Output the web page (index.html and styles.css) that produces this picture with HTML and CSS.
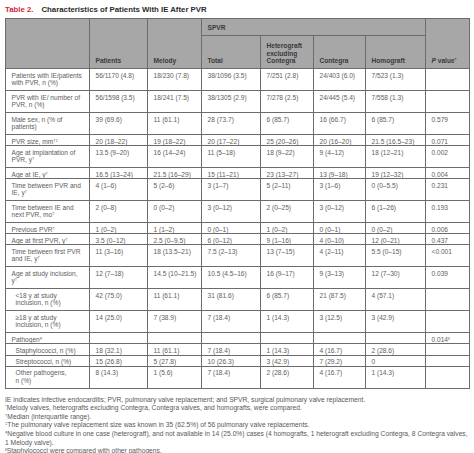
FILE: index.html
```html
<!DOCTYPE html>
<html>
<head>
<meta charset="utf-8">
<link rel="stylesheet" href="styles.css">
</head>
<body>
<div class="page">
  <div class="title"><span class="tnum">Table 2.</span><span class="ttext">Characteristics of Patients With IE After PVR</span></div>
  <table class="tbl">
    <colgroup>
      <col class="c1"><col class="c2"><col class="c3"><col class="c4"><col class="c5"><col class="c6"><col class="c7"><col class="c8">
    </colgroup>
    <thead>
      <tr class="h1">
        <th rowspan="2"></th>
        <th rowspan="2">Patients</th>
        <th rowspan="2">Melody</th>
        <th colspan="4" class="spvr">SPVR</th>
        <th rowspan="2"><i>P</i> value<sup>*</sup></th>
      </tr>
      <tr class="h2">
        <th>Total</th>
        <th>Heterograft<br>excluding<br>Contegra</th>
        <th>Contegra</th>
        <th>Homograft</th>
      </tr>
    </thead>
    <tbody>
      <tr class="d"><td>Patients with IE/patients<br>with PVR, n (%)</td><td>56/1170 (4.8)</td><td>18/230 (7.8)</td><td>38/1096 (3.5)</td><td>7/251 (2.8)</td><td>24/403 (6.0)</td><td>7/523 (1.3)</td><td></td></tr>
      <tr class="d"><td>PVR with IE/ number of<br>PVR, n (%)</td><td>56/1598 (3.5)</td><td>18/241 (7.5)</td><td>38/1305 (2.9)</td><td>7/278 (2.5)</td><td>24/445 (5.4)</td><td>7/558 (1.3)</td><td></td></tr>
      <tr class="d"><td>Male sex, n (% of<br>patients)</td><td>39 (69.6)</td><td>11 (61.1)</td><td>28 (73.7)</td><td>6 (85.7)</td><td>16 (66.7)</td><td>6 (85.7)</td><td>0.579</td></tr>
      <tr class="s"><td>PVR size, mm<sup>†‡</sup></td><td>20 (18–22)</td><td>19 (18–22)</td><td>20 (17–22)</td><td>25 (20–26)</td><td>20 (16–20)</td><td>21.5 (16.5–23)</td><td>0.071</td></tr>
      <tr class="d"><td>Age at implantation of<br>PVR, y<sup>†</sup></td><td>13.5 (9–20)</td><td>16 (14–24)</td><td>11 (5–18)</td><td>18 (9–22)</td><td>9 (4–12)</td><td>18 (12–21)</td><td>0.002</td></tr>
      <tr class="s"><td>Age at IE, y<sup>†</sup></td><td>16.5 (13–24)</td><td>21.5 (16–29)</td><td>15 (11–21)</td><td>23 (13–27)</td><td>13 (9–18)</td><td>19 (12–32)</td><td>0.004</td></tr>
      <tr class="d"><td>Time between PVR and<br>IE, y<sup>†</sup></td><td>4 (1–6)</td><td>5 (2–6)</td><td>3 (1–7)</td><td>5 (2–11)</td><td>3 (1–6)</td><td>0 (0–5.5)</td><td>0.231</td></tr>
      <tr class="d"><td>Time between IE and<br>next PVR, mo<sup>†</sup></td><td>2 (0–8)</td><td>0 (0–2)</td><td>3 (0–12)</td><td>2 (0–25)</td><td>3 (0–12)</td><td>6 (1–26)</td><td>0.193</td></tr>
      <tr class="s"><td>Previous PVR<sup>†</sup></td><td>1 (0–2)</td><td>1 (1–2)</td><td>0 (0–1)</td><td>1 (0–2)</td><td>0 (0–1)</td><td>0 (0–2)</td><td>0.006</td></tr>
      <tr class="s"><td>Age at first PVR, y<sup>†</sup></td><td>3.5 (0–12)</td><td>2.5 (0–9.5)</td><td>6 (0–12)</td><td>9 (1–16)</td><td>4 (0–10)</td><td>12 (0–21)</td><td>0.437</td></tr>
      <tr class="d"><td>Time between first PVR<br>and IE, y<sup>†</sup></td><td>11 (3–16)</td><td>18 (13.5–21)</td><td>7.5 (2–13)</td><td>13 (7–15)</td><td>4 (2–11)</td><td>5.5 (0–15)</td><td>&lt;0.001</td></tr>
      <tr class="d"><td>Age at study inclusion,<br>y<sup>†</sup></td><td>12 (7–18)</td><td>14.5 (10–21.5)</td><td>10.5 (4.5–16)</td><td>16 (9–17)</td><td>9 (3–13)</td><td>12 (7–30)</td><td>0.039</td></tr>
      <tr class="d"><td class="ind">&lt;18 y at study<br>inclusion, n (%)</td><td>42 (75.0)</td><td>11 (61.1)</td><td>31 (81.6)</td><td>6 (85.7)</td><td>21 (87.5)</td><td>4 (57.1)</td><td></td></tr>
      <tr class="d"><td class="ind">≥18 y at study<br>inclusion, n (%)</td><td>14 (25.0)</td><td>7 (38.9)</td><td>7 (18.4)</td><td>1 (14.3)</td><td>3 (12.5)</td><td>3 (42.9)</td><td></td></tr>
      <tr class="s"><td>Pathogen<sup>§</sup></td><td></td><td></td><td></td><td></td><td></td><td></td><td>0.014<sup>‖</sup></td></tr>
      <tr class="s"><td class="ind">Staphylococci, n (%)</td><td>18 (32.1)</td><td>11 (61.1)</td><td>7 (18.4)</td><td>1 (14.3)</td><td>4 (16.7)</td><td>2 (28.6)</td><td></td></tr>
      <tr class="s"><td class="ind">Streptococci, n (%)</td><td>15 (26.8)</td><td>5 (27.8)</td><td>10 (26.3)</td><td>3 (42.9)</td><td>7 (29.2)</td><td>0</td><td></td></tr>
      <tr class="d"><td class="ind">Other pathogens,<br>n (%)</td><td>8 (14.3)</td><td>1 (5.6)</td><td>7 (18.4)</td><td>2 (28.6)</td><td>4 (16.7)</td><td>1 (14.3)</td><td></td></tr>
    </tbody>
  </table>
  <div class="notes">
    <p>IE indicates infective endocarditis; PVR, pulmonary valve replacement; and SPVR, surgical pulmonary valve replacement.</p>
    <p><sup>*</sup>Melody valves, heterografts excluding Contegra, Contegra valves, and homografts, were compared.</p>
    <p><sup>†</sup>Median (interquartile range).</p>
    <p><sup>‡</sup>The pulmonary valve replacement size was known in 35 (62.5%) of 56 pulmonary valve replacements.</p>
    <p><sup>§</sup>Negative blood culture in one case (heterograft), and not available in 14 (25.0%) cases (4 homografts, 1 heterograft excluding Contegra, 8 Contegra valves,</p>
    <p>1 Melody valve).</p>
    <p><sup>‖</sup>Staphylococci were compared with other pathogens.</p>
  </div>
</div>
</body>
</html>
```

FILE: styles.css
```css
html, body {
  margin: 0;
  padding: 0;
  background: #ffffff;
}

body {
  font-family: "Liberation Sans", Arial, Helvetica, sans-serif;
  color: #5e5e5e;
  font-size: 6.6px;
}

.page {
  padding: 0 0 0 5px;
}

.title {
  height: 18px;
  line-height: 20px;
  font-size: 7.8px;
  font-weight: bold;
  white-space: nowrap;
}

.tnum {
  color: #d0243c;
  margin-right: 8px;
}

.ttext {
  color: #2b2b2b;
}

.tbl {
  border-collapse: collapse;
  table-layout: fixed;
  width: 464px;
}

.c1 { width: 84px; }
.c2 { width: 58px; }
.c3 { width: 54px; }
.c4 { width: 59px; }
.c5 { width: 53px; }
.c6 { width: 52px; }
.c7 { width: 60px; }
.c8 { width: 44px; }

.tbl th,
.tbl td {
  border: 1px solid #6c6c6c;
  padding: 2.5px 2px 0 5.5px;
  line-height: 7.6px;
  text-align: left;
  vertical-align: top;
  white-space: nowrap;
  overflow: hidden;
}

.tbl th {
  background: #a7a7a7;
  color: #3a3a3a;
  font-weight: bold;
  vertical-align: bottom;
  padding-bottom: 3px;
}

.tbl .h1 { height: 17px; }
.tbl .h2 { height: 33px; }

.tbl th.spvr {
  vertical-align: middle;
  padding-bottom: 1px;
}

.tbl tr.d { height: 22px; }
.tbl tr.s { height: 11px; }

.tbl td.ind {
  padding-left: 9.5px;
}

sup {
  font-size: 4.2px;
  line-height: 0;
  vertical-align: 2.5px;
}

.notes {
  padding-top: 7px;
  color: #585858;
  font-size: 6.7px;
}

.notes p {
  margin: 0;
  line-height: 8.6px;
  white-space: nowrap;
}
```
